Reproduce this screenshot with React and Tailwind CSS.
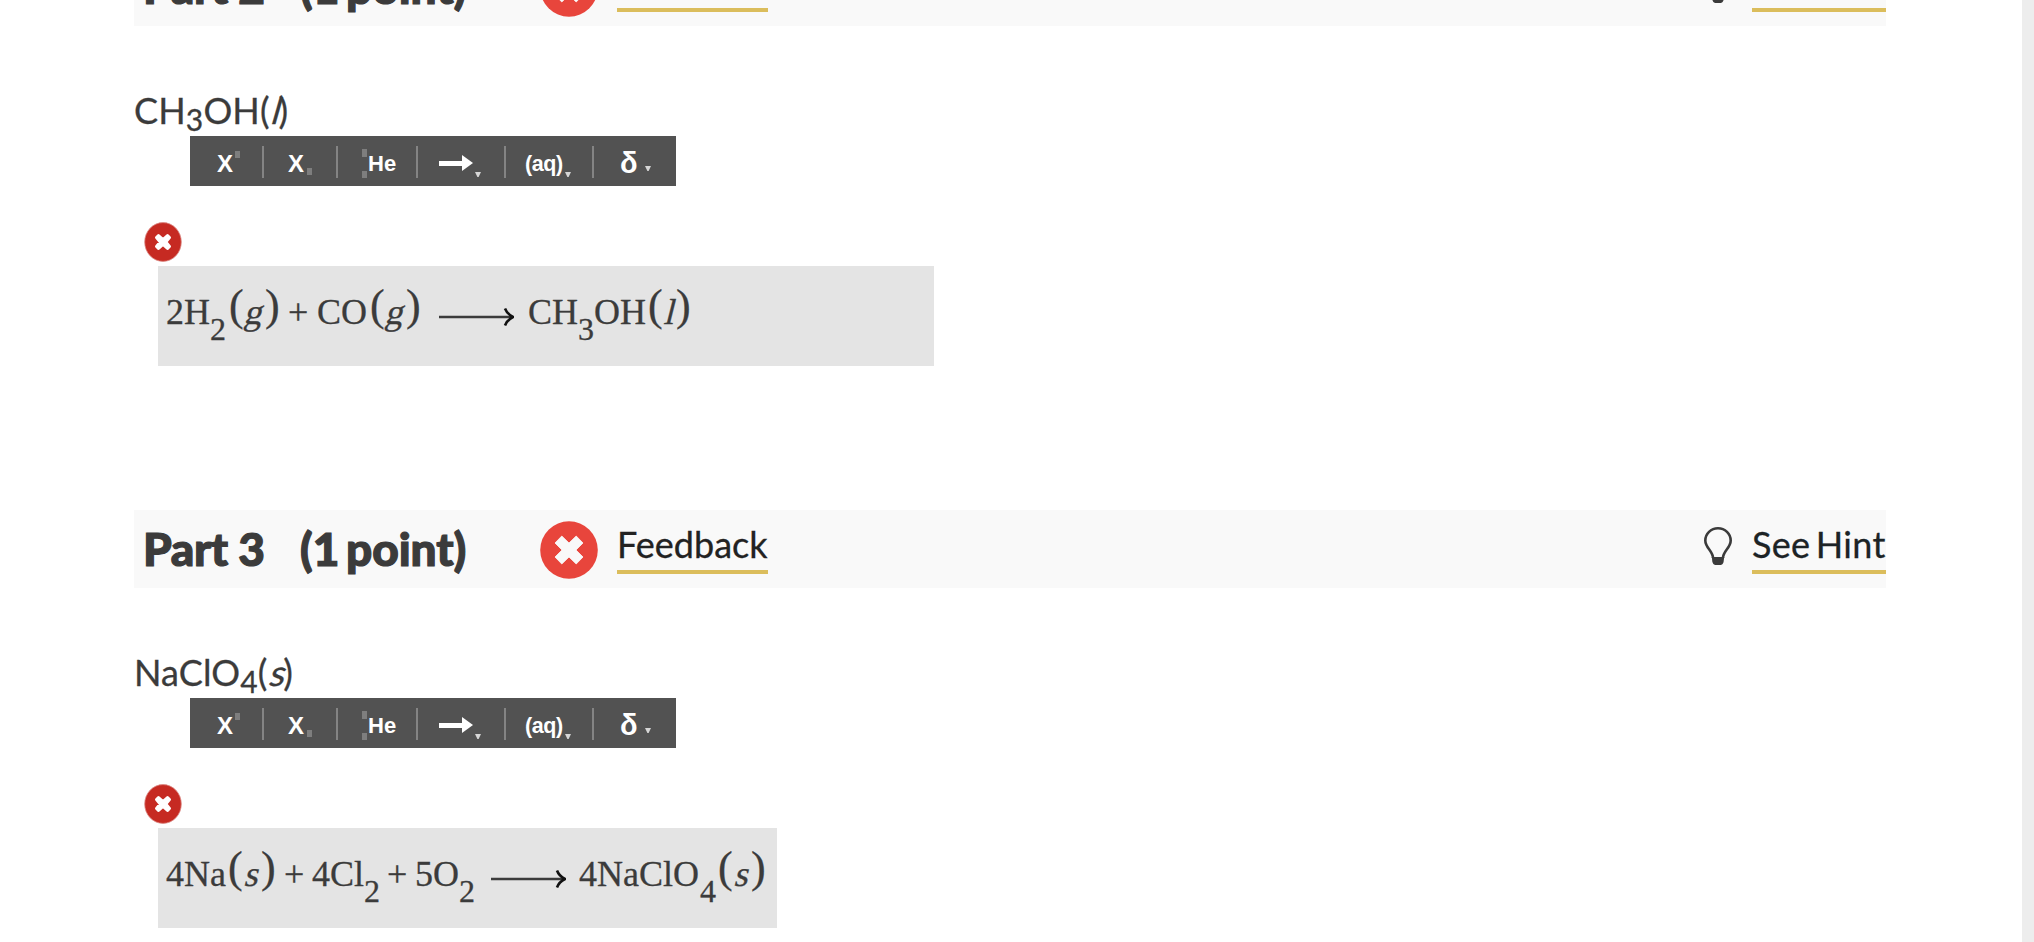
import React from 'react';

const parts = [
  {
    title: 'Part 2',
    question: { before: 'CH', sub: '3', after: 'OH', state: 'l' },
    boxClass: 'w-[776px]',
    equation: [
      { type: 'text', value: '2H', w: 44 },
      { type: 'sub', value: '2', w: 19 },
      { type: 'paren', value: '(', w: 15 },
      { type: 'state', value: 'g', w: 21 },
      { type: 'paren', value: ')', w: 23 },
      { type: 'text', value: '+', w: 29 },
      { type: 'text', value: 'CO', w: 53 },
      { type: 'paren', value: '(', w: 15 },
      { type: 'state', value: 'g', w: 21 },
      { type: 'paren', value: ')', w: 33 },
      { type: 'arrow', w: 89 },
      { type: 'text', value: 'CH', w: 50 },
      { type: 'sub', value: '3', w: 16 },
      { type: 'text', value: 'OH', w: 54 },
      { type: 'paren', value: '(', w: 16 },
      { type: 'state', value: 'l', w: 12 },
      { type: 'paren', value: ')', w: 14 },
    ],
  },
  {
    title: 'Part 3',
    question: { before: 'NaClO', sub: '4', after: '', state: 's' },
    boxClass: 'w-[619px]',
    equation: [
      { type: 'text', value: '4Na', w: 62 },
      { type: 'paren', value: '(', w: 16 },
      { type: 'state', value: 's', w: 17 },
      { type: 'paren', value: ')', w: 23 },
      { type: 'text', value: '+', w: 28 },
      { type: 'text', value: '4Cl', w: 52 },
      { type: 'sub', value: '2', w: 23 },
      { type: 'text', value: '+', w: 28 },
      { type: 'text', value: '5O', w: 44 },
      { type: 'sub', value: '2', w: 32 },
      { type: 'arrow', w: 88 },
      { type: 'text', value: '4NaClO', w: 121 },
      { type: 'sub', value: '4', w: 18 },
      { type: 'paren', value: '(', w: 16 },
      { type: 'state', value: 's', w: 17 },
      { type: 'paren', value: ')', w: 14 },
    ],
  },
];

const crossPath = 'M21.8 15 L29 22 L36.2 15 L43 22 L36 29 L43 36 L36.2 43 L29 36 L21.8 43 L15 36 L22 29 L15 22 Z';

const FeedbackIcon = () => (
  <svg className="w-[58px] h-[58px] mt-[11px]" viewBox="0 0 58 58">
    <circle cx="29" cy="29" r="28.8" fill="#e8453c" />
    <path d={crossPath} fill="#f9f9f9" stroke="#f9f9f9" strokeWidth="0.8" strokeLinejoin="round" />
  </svg>
);

const IncorrectBadge = () => (
  <svg className="w-[38px] h-10 ml-2.5 mt-9" viewBox="0 0 38 40">
    <ellipse cx="19" cy="20" rx="18.3" ry="19.4" fill="#c62a22" stroke="#dc8a85" strokeWidth="0.8" />
    <path
      d="M14.5 13.5 L19 17.5 L23.5 13.5 L25.5 15.5 L21.8 20 L25.5 24.5 L23.5 26.5 L19 22.5 L14.5 26.5 L12.5 24.5 L16.2 20 L12.5 15.5 Z"
      fill="#fff"
      stroke="#fff"
      strokeWidth="3"
      strokeLinejoin="round"
    />
  </svg>
);

const Bulb = () => (
  <svg className="w-7 h-[38px]" viewBox="0 0 28 38">
    <path
      d="M9 31 C9 24 1.3 21 1.3 13.5 A12.7 12.2 0 0 1 26.7 13.5 C26.7 21 19 24 19 31"
      fill="none"
      stroke="#3b3b3b"
      strokeWidth="2.6"
    />
    <path d="M7.8 30 H20.2 L19.6 35 Q18.8 38 17 38 H11 Q9.2 38 8.4 35 Z" fill="#3b3b3b" />
  </svg>
);

const PartHeader = ({ title }) => (
  <header className="w-[1752px] h-[78px] bg-[#f9f9f9] flex items-start justify-between">
    <div className="flex items-start">
      <h2 className="w-[157px] pl-[9px] pt-[7px] text-[46px] leading-[64px] font-black tracking-[-0.4px] whitespace-nowrap [-webkit-text-stroke:1.2px_#3b3b3b]">{title}</h2>
      <span className="w-[249px] pl-[9px] pt-[7px] text-[46px] leading-[64px] font-black tracking-[-0.1px] [word-spacing:-4px] whitespace-nowrap [-webkit-text-stroke:1.2px_#3b3b3b]">(1 point)</span>
      <FeedbackIcon />
      <a className="ml-[19px] mt-3 h-[52px] border-b-4 border-[#dbbd5c] text-[36px] leading-[44px] text-[#222] [-webkit-text-stroke:0.3px_#222]">Feedback</a>
    </div>
    <div className="flex items-start">
      <div className="pt-[17px] mr-5"><Bulb /></div>
      <a className="mt-3 w-[134px] h-[52px] border-b-4 border-[#dbbd5c] text-[36px] leading-[44px] tracking-[0.3px] [word-spacing:-4px] text-[#1c2326] whitespace-nowrap [-webkit-text-stroke:0.3px_#1c2326]">See Hint</a>
    </div>
  </header>
);

const Divider = () => <span className="w-0.5 h-8 mt-2.5 bg-[#848484]" />;

const Caret = ({ className }) => (
  <svg className={`w-1.5 h-[5px] ${className}`} viewBox="0 0 6 5">
    <path d="M0 0 H6 L3.6 5 H2.4 Z" fill="#d6d6d6" />
  </svg>
);

const Toolbar = () => (
  <div className="ml-14 w-[486px] h-[50px] bg-[#525252] text-white flex items-start font-['Liberation_Sans',Arial,sans-serif] font-bold">
    <button className="w-[72px] flex items-start pl-[27px]">
      <span className="text-[24px] leading-7 mt-3.5">X</span>
      <span className="w-[5px] h-[7px] mt-[15px] ml-0.5 bg-[#7e7e7e]" />
    </button>
    <Divider />
    <button className="w-[72px] flex items-start pl-6">
      <span className="text-[24px] leading-7 mt-3.5">X</span>
      <span className="w-[5px] h-[7px] mt-8 ml-[3px] bg-[#7e7e7e]" />
    </button>
    <Divider />
    <button className="w-[78px] flex items-start pl-6">
      <span className="flex flex-col justify-between w-[5px] h-[29px] mt-[13px]">
        <span className="h-2 bg-[#7e7e7e]" />
        <span className="h-[7px] bg-[#7e7e7e]" />
      </span>
      <span className="text-[22px] leading-7 mt-3.5 ml-px">He</span>
    </button>
    <Divider />
    <button className="w-[86px] flex items-start pl-[21px]">
      <svg className="w-[34px] h-4 mt-[19px]" viewBox="0 0 34 16">
        <path d="M0 6 H23 V0 L34 8 L23 16 V11 H0 Z" fill="#fff" />
      </svg>
      <Caret className="mt-9 ml-0.5" />
    </button>
    <Divider />
    <button className="w-[86px] flex items-start pl-[19px]">
      <span className="text-[21.5px] leading-7 mt-3.5 tracking-[-0.4px]">(aq)</span>
      <Caret className="mt-9 ml-0.5" />
    </button>
    <Divider />
    <button className="w-[82px] flex items-start pl-[26px]">
      <span className="w-[25px] text-left text-[29px] leading-8 mt-[11px]">δ</span>
      <Caret className="mt-[30px]" />
    </button>
  </div>
);

const tokenClass = {
  text: 'text-[36px]',
  sub: 'text-[32px] relative top-4',
  paren: 'text-[44px] relative -top-1',
  state: 'text-[36px] -skew-x-[14deg] origin-[0_65%]',
};

const Token = ({ token }) => {
  if (token.type === 'arrow') {
    return (
      <span style={{ width: token.w }}>
        <svg className="w-[75px] h-5 relative top-[3px]" viewBox="0 0 75 20">
          <path d="M0 10 H72" stroke="#3b3b3b" strokeWidth="2.6" />
          <path d="M66 1.5 Q68 7 74 10 Q68 13 66 18.5" fill="none" stroke="#111" strokeWidth="2.6" />
        </svg>
      </span>
    );
  }
  return (
    <span className={`whitespace-nowrap ${tokenClass[token.type]}`} style={{ width: token.w }}>
      {token.value}
    </span>
  );
};

const Equation = ({ tokens, boxClass }) => (
  <div className={`ml-6 mt-1 h-[100px] bg-[#e4e4e4] pl-2 pt-3.5 flex items-baseline leading-[60px] font-['Liberation_Serif','Times_New_Roman',serif] [-webkit-text-stroke:0.3px_#3b3b3b] ${boxClass}`}>
    {tokens.map((token, i) => (
      <Token key={i} token={token} />
    ))}
  </div>
);

const Part = ({ part }) => {
  const { before, sub, after, state } = part.question;
  return (
    <section className="h-[562px] shrink-0">
      <PartHeader title={part.title} />
      <div className="h-[110px] pt-[60px]">
        <p className="text-[36px] leading-[48px] tracking-[0.15px] whitespace-nowrap [-webkit-text-stroke:0.3px_#3b3b3b]">
          {before}
          <sub className="text-[30px] leading-none bottom-[-7px]">{sub}</sub>
          {after}(<span className="inline-block -skew-x-[16deg] origin-[0_75%]">{state}</span>)
        </p>
      </div>
      <Toolbar />
      <IncorrectBadge />
      <Equation tokens={part.equation} boxClass={part.boxClass} />
    </section>
  );
};

const App = () => {
  return (
    <div className="w-[2034px] h-[942px] overflow-hidden bg-white flex justify-between text-[#3b3b3b] font-['Lato',sans-serif]">
      <main className="ml-[134px] -mt-[52px] flex flex-col">
        {parts.map((part) => (
          <Part key={part.title} part={part} />
        ))}
      </main>
      {/* scrollbar gutter */}
      <aside className="w-3 bg-[#ededed]" />
    </div>
  );
};

export default App;
